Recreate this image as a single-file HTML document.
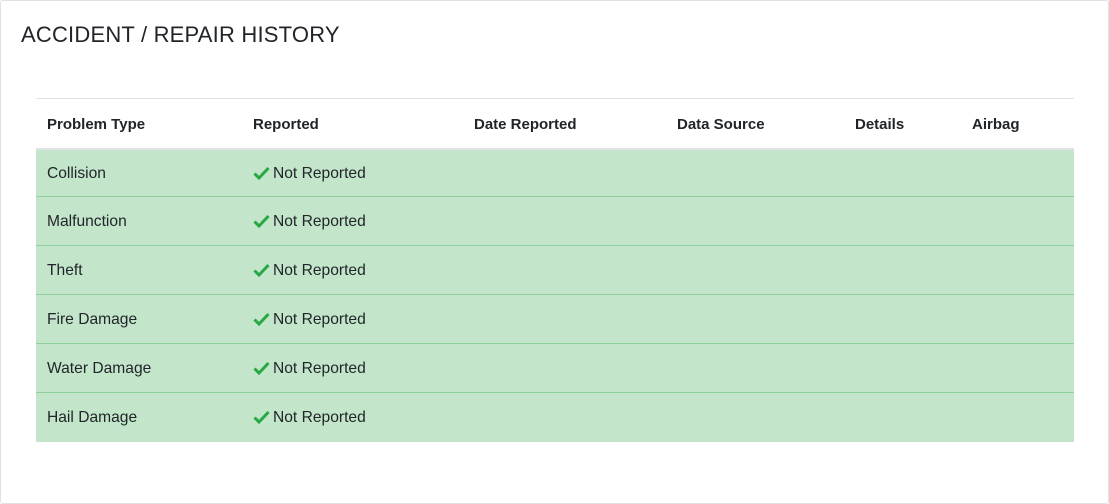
<!DOCTYPE html>
<html><head><style>
html,body{margin:0;padding:0;background:#fff;}
body{width:1109px;height:504px;font-family:"Liberation Sans",Roboto,sans-serif;color:#212529;position:relative;overflow:hidden}
.card{position:absolute;left:0;top:0;width:1107px;height:502px;border:1px solid #dee2e6;border-radius:3px}
h2{position:absolute;left:21px;top:22px;margin:0;font-size:22px;font-weight:400;letter-spacing:0.2px}
table{position:absolute;left:36px;top:98px;width:1038px;border-collapse:collapse;font-size:15px}
th{text-align:left;font-weight:bold;height:50px;border-top:1px solid #dee2e6;border-bottom:2px solid #dee2e6;padding:2px 0 0 11px;box-sizing:border-box}
td{height:49px;padding:2px 0 0 11px;background:#c3e6cb;border-top:1px solid #8fd19e;font-size:15.6px;box-sizing:border-box}
tr.f td{border-top:none;height:48px}
svg{vertical-align:-2px;margin-right:3px}
</style></head><body>
<div class="card"></div>
<h2>ACCIDENT / REPAIR HISTORY</h2>
<table>
<tr><th style="width:206px">Problem Type</th><th style="width:221px">Reported</th><th style="width:203px">Date Reported</th><th style="width:178px">Data Source</th><th style="width:117px">Details</th><th>Airbag</th></tr>
<tr class="f"><td>Collision</td><td><svg width="17" height="14" viewBox="0 0 17 14"><path d="M1.5 7.5l4.5 4.5 9.5-10" fill="none" stroke="#28a745" stroke-width="3"/></svg>Not Reported</td><td></td><td></td><td></td><td></td></tr>
<tr><td>Malfunction</td><td><svg width="17" height="14" viewBox="0 0 17 14"><path d="M1.5 7.5l4.5 4.5 9.5-10" fill="none" stroke="#28a745" stroke-width="3"/></svg>Not Reported</td><td></td><td></td><td></td><td></td></tr>
<tr><td>Theft</td><td><svg width="17" height="14" viewBox="0 0 17 14"><path d="M1.5 7.5l4.5 4.5 9.5-10" fill="none" stroke="#28a745" stroke-width="3"/></svg>Not Reported</td><td></td><td></td><td></td><td></td></tr>
<tr><td>Fire Damage</td><td><svg width="17" height="14" viewBox="0 0 17 14"><path d="M1.5 7.5l4.5 4.5 9.5-10" fill="none" stroke="#28a745" stroke-width="3"/></svg>Not Reported</td><td></td><td></td><td></td><td></td></tr>
<tr><td>Water Damage</td><td><svg width="17" height="14" viewBox="0 0 17 14"><path d="M1.5 7.5l4.5 4.5 9.5-10" fill="none" stroke="#28a745" stroke-width="3"/></svg>Not Reported</td><td></td><td></td><td></td><td></td></tr>
<tr><td>Hail Damage</td><td><svg width="17" height="14" viewBox="0 0 17 14"><path d="M1.5 7.5l4.5 4.5 9.5-10" fill="none" stroke="#28a745" stroke-width="3"/></svg>Not Reported</td><td></td><td></td><td></td><td></td></tr>
</table>
</body></html>
